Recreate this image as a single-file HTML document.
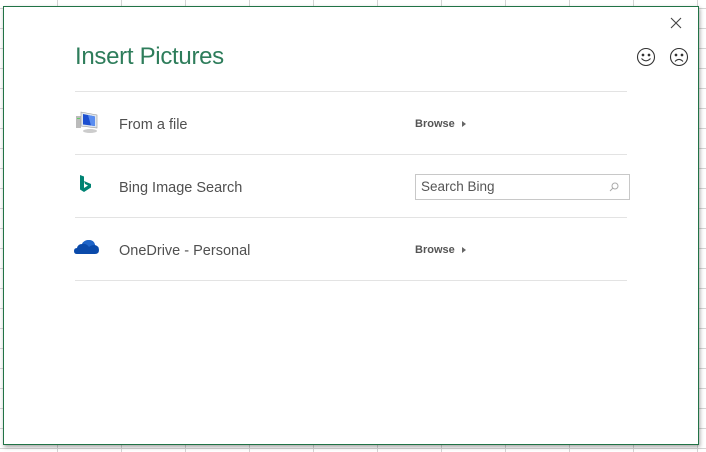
<!DOCTYPE html>
<html><head><style>
html,body{margin:0;padding:0}
body{width:706px;height:452px;position:relative;overflow:hidden;background:#fff;font-family:"Liberation Sans",sans-serif;
background-image:linear-gradient(#d4d4d4 1px,transparent 1px),linear-gradient(90deg,#d4d4d4 1px,transparent 1px);
background-size:64px 20px,64px 20px;background-position:0 8px,57px 0}
.dlg{position:absolute;left:3px;top:6px;width:694px;height:437px;border:1px solid #217346;background:#fff;box-shadow:1px 2px 4px rgba(0,0,0,.35)}
.t{position:absolute;left:71px;top:36px;font-size:24px;color:#2e7d5b;font-weight:normal;letter-spacing:-.3px}
.sep{position:absolute;left:71px;width:552px;height:1px;background:#e3e3e3}
.lbl{position:absolute;left:115px;font-size:14.5px;color:#505050}
.br{position:absolute;left:411px;font-size:11px;font-weight:bold;color:#555}
.br:after{content:"";display:inline-block;border-left:4px solid #666;border-top:3.5px solid transparent;border-bottom:3.5px solid transparent;margin-left:7px;vertical-align:0}
.sb{position:absolute;left:411px;top:167px;border:1px solid #c8c8c8;font-size:13.5px;color:#555;line-height:24px;padding-left:5px;box-sizing:border-box;width:215px;height:26px}
</style></head><body>
<div class="dlg">
<svg style="position:absolute;left:666px;top:10px" width="12" height="12"><path d="M1 1L11 11M11 1L1 11" stroke="#444" stroke-width="1.1"/></svg>
<svg style="position:absolute;left:632px;top:40px" width="20" height="20" fill="none" stroke="#333" stroke-width="1.1"><circle cx="10" cy="10" r="8.5"/><circle cx="7" cy="8" r=".8" fill="#333"/><circle cx="13" cy="8" r=".8" fill="#333"/><path d="M5.5 11.5Q10 16 14.5 11.5"/></svg>
<svg style="position:absolute;left:665px;top:40px" width="20" height="20" fill="none" stroke="#333" stroke-width="1.1"><circle cx="10" cy="10" r="8.5"/><circle cx="7" cy="8" r=".8" fill="#333"/><circle cx="13" cy="8" r=".8" fill="#333"/><path d="M6 14.5Q10 10.5 14 14.5"/></svg>
<div class="t">Insert Pictures</div>
<div class="sep" style="top:84px"></div>
<div class="sep" style="top:147px"></div>
<div class="sep" style="top:210px"></div>
<div class="sep" style="top:273px"></div>
<svg style="position:absolute;left:71px;top:104px" width="26" height="24"><rect x="1" y="5" width="5" height="12" fill="#bbb"/><rect x="2" y="7" width="3" height="1" fill="#6c6"/><path d="M6 1L22 4L22 17L6 15Z" fill="#dfe6ee" stroke="#999" stroke-width=".6"/><path d="M8 3L20 5.5L20 15L8 13.5Z" fill="#1c4fd0"/><path d="M13 4L20 5.5L20 15L16 14.5Z" fill="#5a8df0"/><ellipse cx="15" cy="20" rx="7" ry="2" fill="#ccc"/></svg>
<div class="lbl" style="top:110px">From a file</div>
<div class="br" style="top:111px">Browse</div>
<svg style="position:absolute;left:75px;top:167px" width="14" height="20"><path d="M1 1L5 2.5L5 14L9 11.5L6 10L5 7L12 10L12 13.5L5 18L1 15.5Z" fill="#008373"/></svg>
<div class="lbl" style="top:173px">Bing Image Search</div>
<div class="sb">Search Bing<svg style="position:absolute;right:10px;top:7px" width="10" height="10" fill="none" stroke="#aaa" stroke-width="1"><circle cx="6" cy="4" r="3"/><path d="M4 6L1 9"/></svg></div>
<svg style="position:absolute;left:70px;top:232px" width="26" height="16"><path d="M3 15Q0 15 0 12Q0 9 3 9Q4 5 8 5Q10 1 15 1Q20 1 21 6Q25 7 25 11Q25 15 21 15Z" fill="#0a4aaa"/><path d="M8 5Q10 1 15 1Q20 1 21 6Q17 6 15 8Q12 4 8 5Z" fill="#1e64c8"/></svg>
<div class="lbl" style="top:236px">OneDrive - Personal</div>
<div class="br" style="top:237px">Browse</div>
</div>
</body></html>
